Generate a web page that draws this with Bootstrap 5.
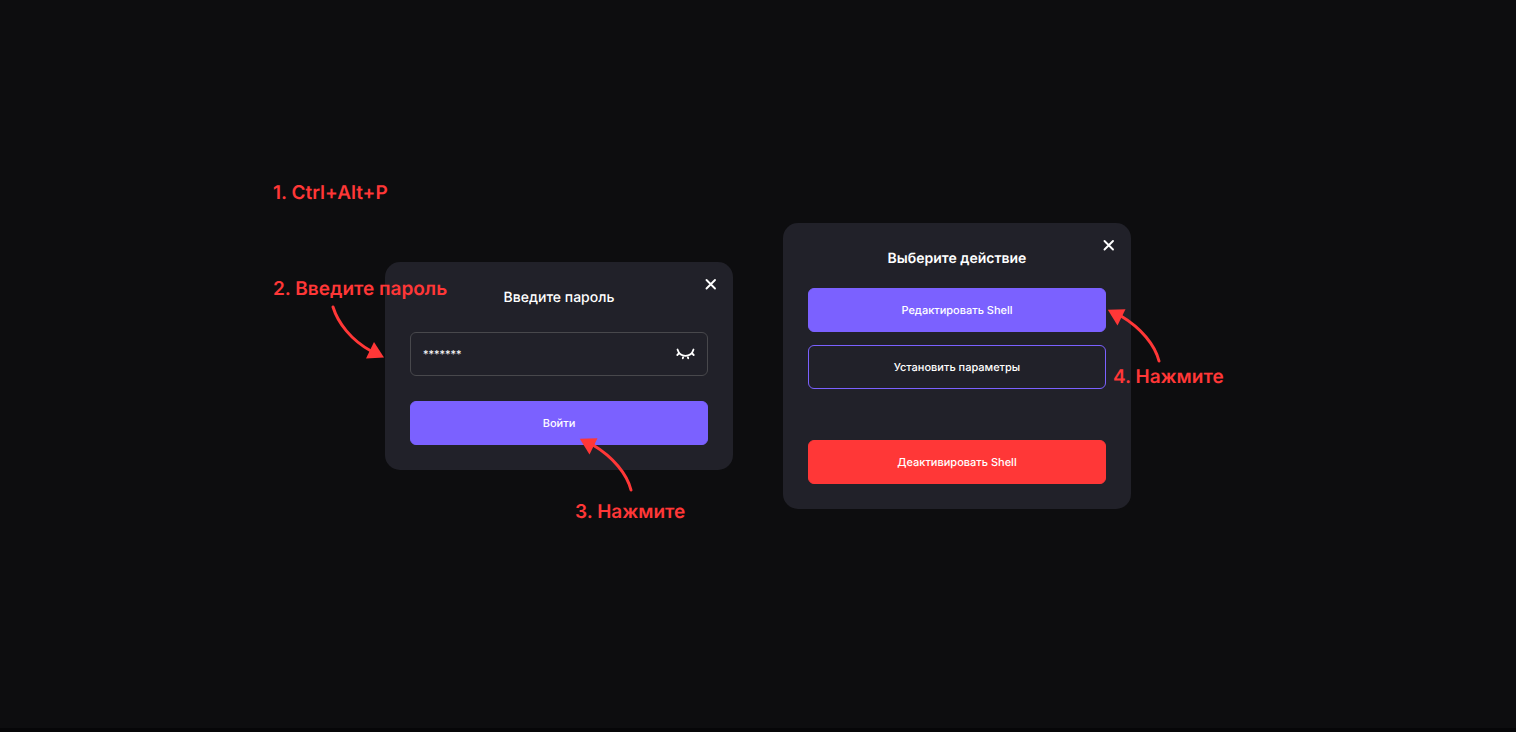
<!DOCTYPE html>
<html lang="ru">
<head>
<meta charset="utf-8">
<meta name="viewport" content="width=device-width, initial-scale=1">
<title>Вход в Shell</title>
<link rel="stylesheet" href="https://cdn.jsdelivr.net/npm/bootstrap@5.3.0/dist/css/bootstrap.min.css">
<style>
  body { background: #0d0d0f; color: #fff; font-family: Inter, "Noto Sans", sans-serif; text-rendering: geometricPrecision; }
  .stage { gap: 50px; border-bottom: 4px solid #060608; padding-top: 4px; }
  .dialog-box { width: 348px; padding: 25px; background: #212129; border-radius: 15px; }
  .dialog-title { font-size: 14px; line-height: 21px; font-weight: 500; }
  .dialog-title.strong { font-weight: 600; }
  .gap-title { margin-top: 19px; }
  .gap-field { margin-top: 24px; }
  .gap-wide { margin-top: 25px; }
  .gap-row { margin-top: 13px; }
  .gap-far { margin-top: 51px; }
  .action { --bs-btn-color: #fff; --bs-btn-hover-color: #fff; --bs-btn-active-color: #fff; --bs-btn-border-radius: 6px;
    height: 44px; font-size: 11px; font-weight: 500; line-height: 16px; text-rendering: inherit; }
  .action-main { --bs-btn-bg: #7b61ff; --bs-btn-border-color: #7b61ff; --bs-btn-hover-bg: #6c52f0; --bs-btn-active-bg: #6c52f0; }
  .action-line { --bs-btn-border-color: #7b61ff; --bs-btn-hover-bg: #2b2a3b; --bs-btn-active-bg: #2b2a3b; }
  .action-stop { --bs-btn-bg: #ff3737; --bs-btn-border-color: #ff3737; --bs-btn-hover-bg: #e92f2f; --bs-btn-active-bg: #e92f2f; }
  .secret, .secret:focus { height: 44px; padding: 0 48px 0 12px; background: #212129; border: 1px solid #48484c; border-radius: 6px;
    color: #fff; font-size: 11px; font-weight: 400; box-shadow: none; text-rendering: inherit; }
  .glyph-btn { padding: 0; border: 0; background: none; color: #fff; line-height: 0; }
  .close-btn { top: 15px; right: 15px; }
  .eye-btn { top: 9px; right: 11px; }
  .note { color: #ff3737; font-size: 19px; line-height: 24px; font-weight: 600; white-space: nowrap; }
  .note-1 { left: -112px; top: -81px; }
  .note-2 { left: -112px; top: 15px; }
  .note-3 { left: 190px; top: 238px; }
  .note-4 { left: 330px; top: 142px; }
  .pointer { color: #ff3737; pointer-events: none; }
  .pointer-2 { left: -56px; top: 41px; }
  .pointer-3 { left: 194px; top: 174px; }
  .pointer-4 { left: 324px; top: 84px; }
</style>
</head>
<body>
<svg class="d-none" aria-hidden="true">
  <symbol id="cross" viewBox="0 0 14 14"><path d="M2.500 3 11 11.500M11 3 2.500 11.500" fill="none" stroke="currentColor" stroke-width="1.9" stroke-linecap="round"/></symbol>
  <symbol id="arrow-up" viewBox="0 0 56 58"><path d="M52 54C48 38 34 21 14 9" fill="none" stroke="currentColor" stroke-width="3" stroke-linecap="round"/><path d="M.8 2.800 18.500 2.300 10.500 18.500Z" fill="currentColor"/></symbol>
</svg>
<main class="stage d-flex flex-wrap justify-content-center align-items-center min-vh-100">
  <section class="dialog-box position-relative" aria-labelledby="login-title">
    <button type="button" class="glyph-btn close-btn position-absolute" aria-label="Закрыть"><svg width="14" height="14"><use href="#cross"/></svg></button>
    <h1 class="dialog-title text-center m-0" id="login-title"><label for="secret">Введите пароль</label></h1>
    <form>
      <div class="position-relative gap-field">
        <input class="form-control secret" id="secret" type="text" value="*******" autocomplete="off">
        <button type="button" class="glyph-btn eye-btn position-absolute" aria-label="Показать пароль">
          <svg width="24" height="24" viewBox="0 0 24 24" fill="none" stroke="currentColor" stroke-width="1.800" stroke-linecap="round"><path d="M4.500 8.500C7 17 18 17 20.500 8.500M6.300 12 4.300 14M10.500 14.800 9.800 17.300M14.500 14.800 15.200 17.300M18.700 12 20.700 14"/></svg>
        </button>
      </div>
      <button type="button" class="btn action action-main w-100 gap-wide">Войти</button>
    </form>
    <span class="note note-1 position-absolute">1. Ctrl+Alt+P</span>
    <span class="note note-2 position-absolute">2. Введите пароль</span>
    <span class="note note-3 position-absolute">3. Нажмите</span>
    <svg class="pointer pointer-2 position-absolute" width="58" height="58" viewBox="0 0 58 58"><path d="M4 4C9 20 22 37 42 48" fill="none" stroke="currentColor" stroke-width="3" stroke-linecap="round"/><path d="M55 54.500 45 39 37 55.500Z" fill="currentColor"/></svg>
    <svg class="pointer pointer-3 position-absolute" width="56" height="58"><use href="#arrow-up"/></svg>
  </section>
  <section class="dialog-box position-relative" aria-labelledby="action-title">
    <button type="button" class="glyph-btn close-btn position-absolute" aria-label="Закрыть"><svg width="14" height="14"><use href="#cross"/></svg></button>
    <h2 class="dialog-title strong text-center m-0" id="action-title">Выберите действие</h2>
    <button type="button" class="btn action action-main w-100 gap-title">Редактировать Shell</button>
    <button type="button" class="btn action action-line w-100 gap-row">Установить параметры</button>
    <button type="button" class="btn action action-stop w-100 gap-far">Деактивировать Shell</button>
    <span class="note note-4 position-absolute">4. Нажмите</span>
    <svg class="pointer pointer-4 position-absolute" width="56" height="58"><use href="#arrow-up"/></svg>
  </section>
</main>
<script src="https://cdn.jsdelivr.net/npm/bootstrap@5.3.0/dist/js/bootstrap.bundle.min.js"></script>
</body>
</html>
